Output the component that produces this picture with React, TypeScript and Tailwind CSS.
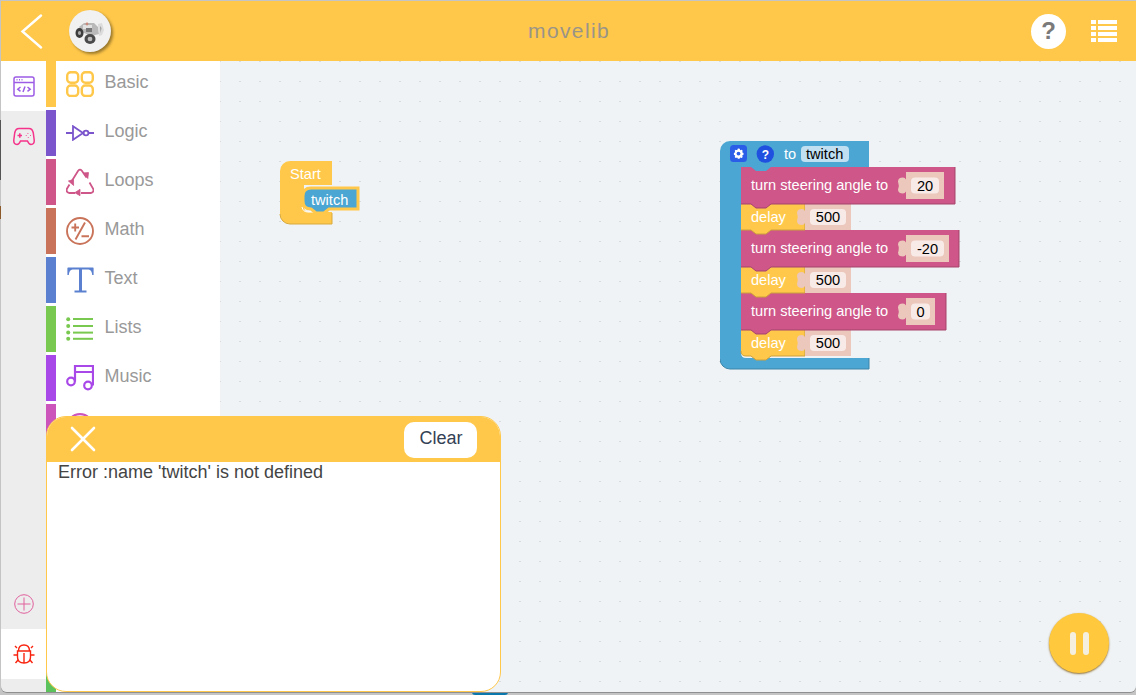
import React from "react";

const FONT = "'Liberation Sans', Arial, sans-serif";

function BasicIcon() {
  return (
    <svg width="28" height="26" viewBox="0 0 28 26" fill="none" stroke="#ffc84a" strokeWidth="2.4">
      <rect x="1.2" y="1.2" width="11" height="10.5" rx="3.5" />
      <rect x="15.8" y="1.2" width="11" height="10.5" rx="3.5" />
      <rect x="1.2" y="14.5" width="11" height="10.5" rx="3.5" />
      <rect x="15.8" y="14.5" width="11" height="10.5" rx="3.5" />
    </svg>
  );
}
function LogicIcon() {
  return (
    <svg width="28" height="16" viewBox="0 0 28 16" fill="none" stroke="#7a55cc" strokeWidth="1.8">
      <path d="M0 8H7M7 1.2V14.8L17 8Z" />
      <circle cx="20" cy="8" r="2.4" />
      <path d="M22.4 8H28" />
    </svg>
  );
}
function LoopsIcon() {
  return (
    <svg width="28" height="28" viewBox="0 0 28 28" fill="none" stroke="#ce5688" strokeWidth="1.8">
      <path d="M5.5 13.5 12.3 2.6Q14 0.8 15.7 2.6L20.5 9.5" />
      <path d="M23.5 14.5 27.3 21Q28 24.6 24.8 25H15" />
      <path d="M9 25H3.4Q0 24.6 0.8 21L3.5 16.5" />
      <path d="M17 5 22.5 4.6 21.8 10.5Z M14 21.3V27.7L8.8 24.7Z M2.4 13 7.5 11.5 7.6 17.5Z" fill="#ce5688" strokeWidth="0.8" />
    </svg>
  );
}
function MathIcon() {
  return (
    <svg width="28" height="28" viewBox="0 0 28 28" fill="none" stroke="#c9745a" strokeWidth="1.9">
      <circle cx="14" cy="14" r="13" />
      <path d="M5.5 10.5H13M9.2 6.6V14.4M19 5.5 9.5 22.5M15.5 19.3H23" />
    </svg>
  );
}
function TextIcon() {
  return (
    <svg width="27" height="26" viewBox="0 0 27 26" fill="#5a80cf">
      <path d="M1 0.5H26Q26.6 0.5 26.6 1.2V8H25.2Q24.8 3 21.5 2.6H15V23.4H19.5V25.6H7.5V23.4H12V2.6H5.5Q2.2 3 1.8 8H0.4V1.2Q0.4 0.5 1 0.5Z" />
    </svg>
  );
}
function ListsIcon() {
  return (
    <svg width="28" height="24" viewBox="0 0 28 24" fill="#79c84f">
      <circle cx="2.2" cy="2.2" r="2" />
      <circle cx="2.2" cy="9" r="2" />
      <circle cx="2.2" cy="15.6" r="2" />
      <circle cx="2.2" cy="21.8" r="2" />
      <rect x="7" y="1" width="20" height="2" />
      <rect x="7" y="8" width="20" height="2" />
      <rect x="7" y="14.6" width="20" height="2" />
      <rect x="7" y="20.8" width="20" height="2" />
    </svg>
  );
}
function MusicIcon() {
  return (
    <svg width="28" height="26" viewBox="0 0 28 26" fill="none" stroke="#a848e8" strokeWidth="2.2">
      <circle cx="5" cy="16.5" r="3.8" />
      <circle cx="22" cy="20.5" r="3.8" />
      <path d="M9 16.5V1H27V20.5M9 7H27" />
    </svg>
  );
}
function NextIcon() {
  return (
    <svg width="28" height="28" viewBox="0 0 28 28" fill="none" stroke="#cc55bb" strokeWidth="2.2">
      <circle cx="14" cy="14" r="12.8" />
    </svg>
  );
}

const rows: { color: string; label?: string; icon?: React.ReactNode }[] = [
  { color: "#ffc84a", label: "Basic", icon: <BasicIcon /> },
  { color: "#7a55cc", label: "Logic", icon: <LogicIcon /> },
  { color: "#ce5688", label: "Loops", icon: <LoopsIcon /> },
  { color: "#c9745a", label: "Math", icon: <MathIcon /> },
  { color: "#5a80cf", label: "Text", icon: <TextIcon /> },
  { color: "#79c84f", label: "Lists", icon: <ListsIcon /> },
  { color: "#a848e8", label: "Music", icon: <MusicIcon /> },
  { color: "#cc55bb", icon: <NextIcon /> },
  { color: "#cc55bb" },
  { color: "#cc55bb" },
  { color: "#cc55bb" },
  { color: "#cc55bb" },
  { color: "#5cc35c" },
];

const BLOCK_TEXT = "14.6";

function Statement({
  y,
  h,
  right,
  fill,
  edge,
  label,
  value,
  slotLeft,
  slotRight,
  inset,
  round,
}: {
  y: number;
  h: number;
  right: number;
  fill: string;
  edge: string;
  label: string;
  value: string;
  slotLeft: number;
  slotRight: number;
  inset: number;
  round?: boolean;
}) {
  const bottom = y + h;
  const corner = round ? `H746 Q741 ${bottom} 741 ${bottom - 5}` : "H741";
  const slotTop = y + inset;
  const slotH = h - inset * 2;
  const mid = y + h / 2;
  const tab = "H771l-5 4h-10l-5-4";
  return (
    <g>
      <path d={`M741 ${y}H${right}V${bottom}${tab}${corner}Z`} fill={fill} />
      <path d={`M${right} ${y}V${bottom}${tab}${corner}`} fill="none" stroke={edge} strokeWidth="1" />
      <path
        d={`M${slotLeft} ${slotTop}H${slotRight}V${slotTop + slotH}H${slotLeft}V${mid + 6}q-1 2-3 2q-5 0-5-4q1.5-4 0-8q0-4 5-4q2 0 3 2Z`}
        fill="#ecc7bb"
      />
      <rect x={slotLeft + 5} y={mid - 8} width={slotRight - slotLeft - 10} height={16} rx={4} fill="#f8ebe7" />
      <text x={751} y={inset ? mid + 4 : mid + 5} fontSize={BLOCK_TEXT} fill="#fff">
        {label}
      </text>
      <text x={(slotLeft + slotRight) / 2} y={mid + 5} fontSize={BLOCK_TEXT} fill="#000" textAnchor="middle">
        {value}
      </text>
    </g>
  );
}

function FunctionBlock() {
  const pink = "#ce5688";
  const pinkEdge = "#a5456d";
  const yellow = "#ffc84a";
  const yellowEdge = "#cca03b";
  return (
    <svg
      width="245"
      height="235"
      viewBox="720 141 245 235"
      className="absolute left-[500px] top-[80px]"
      style={{ fontFamily: FONT }}
    >
      <path
        d="M720 151a10 10 0 0 1 10-10H869V167H741V353q0 5 5 5H869V369H730a10 10 0 0 1-10-10Z"
        fill="#4ba6d3"
      />
      <path d="M720 359a10 10 0 0 0 10 10H869V358" fill="none" stroke="#3d85a9" strokeWidth="1" />
      <Statement y={330} h={26} right={805} fill={yellow} edge={yellowEdge} label="delay" value="500" slotLeft={805} slotRight={851} inset={0} round />
      <Statement y={293} h={37} right={946} fill={pink} edge={pinkEdge} label="turn steering angle to" value="0" slotLeft={906} slotRight={935} inset={5} />
      <Statement y={267} h={26} right={805} fill={yellow} edge={yellowEdge} label="delay" value="500" slotLeft={805} slotRight={851} inset={0} />
      <Statement y={230} h={37} right={959} fill={pink} edge={pinkEdge} label="turn steering angle to" value="-20" slotLeft={906} slotRight={949} inset={5} />
      <Statement y={204} h={26} right={805} fill={yellow} edge={yellowEdge} label="delay" value="500" slotLeft={805} slotRight={851} inset={0} />
      <Statement y={167} h={37} right={955} fill={pink} edge={pinkEdge} label="turn steering angle to" value="20" slotLeft={906} slotRight={944} inset={5} />
      <path d="M751 167H771l-5 4h-10Z" fill="#4ba6d3" />
      <rect x="730" y="145" width="17" height="17" rx="3.5" fill="#2a5ee8" />
      <path
        d="M738.5 148.5l1.2.3.5 1.4 1.5-.4 1 1-.5 1.5 1.3.8v1.6l-1.3.7.5 1.5-1 1-1.5-.4-.7 1.3h-1.6l-.7-1.3-1.5.4-1-1 .5-1.5-1.3-.7v-1.6l1.3-.8-.5-1.5 1-1 1.5.4.5-1.4Z"
        fill="#fff"
      />
      <circle cx="738.5" cy="153.6" r="1.9" fill="#2a5ee8" />
      <circle cx="765.3" cy="154" r="8.7" fill="#1f50e0" />
      <text x="765.3" y="158.5" fontSize="12" fontWeight="700" fill="#fff" textAnchor="middle">
        ?
      </text>
      <text x="784" y="159" fontSize={BLOCK_TEXT} fill="#fff">
        to
      </text>
      <rect x="801" y="146" width="48" height="16" rx="4" fill="#c0dff0" />
      <text x="806" y="159" fontSize={BLOCK_TEXT} fill="#000">
        twitch
      </text>
    </svg>
  );
}

function StartBlock() {
  return (
    <svg
      width="90"
      height="70"
      viewBox="278 158 90 70"
      className="absolute left-[58px] top-[97px]"
      style={{ fontFamily: FONT }}
    >
      <path d="M280 171a10 10 0 0 1 10-10H332V185H304V207q0 5 5 5H332V224H290a10 10 0 0 1-10-10Z" fill="#ffc84a" />
      <path d="M280 214a10 10 0 0 0 10 10H332V213" fill="none" stroke="#d7a93e" strokeWidth="1" />
      <path d="M302 207q1 5 6 5H325" fill="none" stroke="#fff" strokeWidth="1" />
      <path
        d="M311 188H358V209H329l-5 4h-8l-5-4q-8 0-8-8V196q0-8 8-8Z"
        fill="#4ba6d3"
        stroke="#ffc84a"
        strokeWidth="3"
      />
      <text x="290" y="179" fontSize={BLOCK_TEXT} fill="#fff">
        Start
      </text>
      <text x="311" y="205" fontSize={BLOCK_TEXT} fill="#fff">
        twitch
      </text>
    </svg>
  );
}

function CarLogo() {
  return (
    <svg width="34" height="26" viewBox="0 0 34 26" className="ml-[2px] mt-[3px]">
      <path d="M5 7 10 3H20L24 7 25 14 17 16 8 12Z" fill="#b9b9b9" />
      <rect x="9" y="5" width="9" height="4" fill="#e2e2e2" />
      <rect x="12" y="8" width="6" height="4" fill="#777" />
      <circle cx="13" cy="4" r="1.4" fill="#c98a7c" />
      <ellipse cx="5.5" cy="13" rx="4" ry="5" fill="#3c3c3c" />
      <ellipse cx="5.5" cy="13" rx="1.6" ry="2" fill="#aaa" />
      <ellipse cx="16" cy="19" rx="5.5" ry="5" fill="#4a4a4a" />
      <ellipse cx="16" cy="19" rx="2.4" ry="2.2" fill="#bdbdbd" />
      <path d="M24 4 28 3 30 10 28 15 25 16Z" fill="#dcdcdc" />
      <path d="M26 6 27.5 8 26.5 13Z" fill="#9a9a9a" />
    </svg>
  );
}

export default function App() {
  return (
    <div
      className="relative flex h-[695px] w-[1136px] flex-col overflow-hidden bg-[#c4c4c4] pb-[3px] pl-px pt-px"
      style={{ fontFamily: FONT }}
    >
      <div className="absolute bottom-0 left-[472px] h-[3px] w-[36px] rounded-b-full bg-[#0b78ad]" />
      <div className="absolute left-0 top-[120px] h-[60px] w-px bg-[#555]" />
      <div className="absolute left-0 top-[206px] h-[13px] w-px bg-[#8a5a2a]" />

      <div className="relative flex min-h-0 flex-1 flex-col overflow-hidden rounded-b-[6px] shadow-[0_1px_0_#8f8f8f]">
        <header className="flex h-[60px] shrink-0 items-center bg-[#ffc84a]">
          <svg width="24" height="36" viewBox="0 0 24 36" fill="none" stroke="#fff" strokeWidth="2.4" className="ml-[19px] mt-[2px]">
            <path d="M21 1.5 2.5 17.5 21 33.5" strokeLinecap="round" />
          </svg>
          <div className="ml-[25px] flex h-[42px] w-[42px] items-center justify-center rounded-full bg-[#f1f1f1] shadow-[2px_2px_3px_rgba(0,0,0,0.4)]">
            <CarLogo />
          </div>
          <div className="ml-[417px] text-[21px] tracking-[1.4px] text-[#9a9488]">movelib</div>
          <div className="ml-auto flex h-[35px] w-[35px] items-center justify-center rounded-full bg-white text-[24px] font-bold text-[#7a7a7a]">
            ?
          </div>
          <svg width="26" height="22" viewBox="0 0 26 22" fill="#fff" className="ml-[25px] mr-[19px]">
            <rect x="0" y="0" width="5" height="4" />
            <rect x="7" y="0" width="19" height="4" />
            <rect x="0" y="6" width="5" height="4" />
            <rect x="7" y="6" width="19" height="4" />
            <rect x="0" y="12" width="5" height="4" />
            <rect x="7" y="12" width="19" height="4" />
            <rect x="0" y="18" width="5" height="4" />
            <rect x="7" y="18" width="19" height="4" />
          </svg>
        </header>

        <div className="flex min-h-0 flex-1">
          <nav className="flex w-[45px] shrink-0 flex-col bg-[#ededed]">
            <div className="flex h-[50px] items-center justify-center bg-white">
              <svg width="22" height="21" viewBox="0 0 22 21" fill="none" stroke="#9c5ce6" strokeWidth="1.5">
                <rect x="1" y="1" width="20" height="19" rx="2" />
                <path d="M1 6.5H21" />
                <path d="M3.5 3.8H4.5M6 3.8H7M8.5 3.8H9.5" strokeWidth="1.4" />
                <path d="M7.5 11 4.8 13.2 7.5 15.4M14.5 11 17.2 13.2 14.5 15.4M12 10.5 10 16" />
              </svg>
            </div>
            <div className="flex h-[50px] items-center justify-center">
              <svg width="22" height="19" viewBox="0 0 22 19" fill="none" stroke="#f5338a" strokeWidth="1.5">
                <path d="M6 1.5H16Q19.5 1.5 20.3 6L21.2 13Q21.5 17.5 18 17.5 16 17.5 14.5 14H7.5Q6 17.5 4 17.5 0.5 17.5 0.8 13L1.7 6Q2.5 1.5 6 1.5Z" />
                <path d="M4.5 8.5H9M6.8 6.3V10.7" />
                <path d="M14.5 6.5h.8M17 8.5h.8M12.8 8.5h.8M14.8 10.5h.8" strokeWidth="1.2" />
              </svg>
            </div>
            <div className="mt-auto flex h-[50px] items-center justify-center">
              <svg width="20" height="20" viewBox="0 0 20 20" fill="none" stroke="#e0609c" strokeWidth="1">
                <circle cx="10" cy="10" r="9.3" />
                <path d="M10 3.5V16.5M3.5 10H16.5" />
              </svg>
            </div>
            <div className="mb-[13px] flex h-[50px] items-center justify-center bg-white">
              <svg width="22" height="20" viewBox="0 0 22 20" fill="none" stroke="#f8240f" strokeWidth="1.4">
                <path d="M5.5 7Q5.5 1 11 1 16.5 1 16.5 7" />
                <path d="M4.5 7H17.5V13Q17.5 19 11 19 4.5 19 4.5 13Z" />
                <path d="M11 9V19" />
                <path d="M4 4 2 2M18 4 20 2M4.5 11H0.5M17.5 11H21.5M5 16 2.5 19M17 16 19.5 19" />
              </svg>
            </div>
          </nav>

          <aside className="flex w-[174px] shrink-0 flex-col overflow-hidden bg-white">
            {rows.map((row, i) => (
              <div key={i} className="mb-[3px] flex h-[46px] shrink-0">
                <div className="w-[10px]" style={{ backgroundColor: row.color }} />
                <div className="relative flex flex-1 items-center pl-[10px]">
                  <div className="flex w-[28px] justify-center">{row.icon}</div>
                  {row.label && <span className="mb-1 ml-[10.5px] text-[18px] text-[#999]">{row.label}</span>}
                </div>
              </div>
            ))}
          </aside>

          <main className="relative min-w-0 flex-1 overflow-hidden bg-[#f0f3f5]">
            <svg className="absolute inset-0 h-full w-full">
              <defs>
                <pattern id="grid" width="20" height="20" patternUnits="userSpaceOnUse" x="-1" y="0">
                  <rect x="0" y="0" width="2" height="1" fill="#d9dcde" />
                </pattern>
              </defs>
              <rect width="100%" height="100%" fill="url(#grid)" />
            </svg>
            <StartBlock />
            <FunctionBlock />
            <div className="absolute bottom-[19px] right-[27px] flex h-[60px] w-[60px] items-center justify-center gap-[7px] rounded-full bg-[#ffc83d] shadow-[0_1px_2px_rgba(120,80,0,0.8)]">
              <div className="h-[23px] w-[6px] rounded-full bg-[#f5efe0]" />
              <div className="h-[23px] w-[6px] rounded-full bg-[#f5efe0]" />
            </div>
          </main>
        </div>
      </div>

      <section className="absolute left-[46px] top-[416px] flex h-[276px] w-[455px] flex-col overflow-hidden rounded-[20px] border border-[#ffc84a] bg-white">
        <div className="flex h-[45px] shrink-0 items-center bg-[#ffc84a] pl-[23px] pr-[23px]">
          <svg width="26" height="26" viewBox="0 0 26 26" fill="none" stroke="#fff" strokeWidth="2.6" strokeLinecap="round" className="mb-[2px]">
            <path d="M2 2 24 24M24 2 2 24" />
          </svg>
          <button className="ml-auto h-[36px] w-[73px] rounded-[10px] bg-white pb-[2px] pl-px text-[18px] text-[#334155]">Clear</button>
        </div>
        <div className="pl-[11px] text-[18px] leading-[20px] text-[#444]">Error :name 'twitch' is not defined</div>
      </section>
    </div>
  );
}
